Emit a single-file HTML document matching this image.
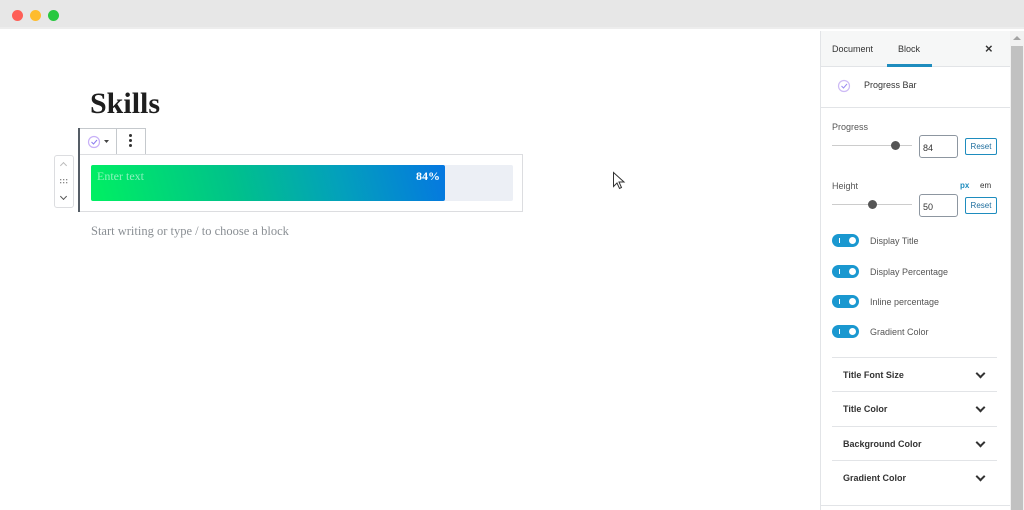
<!DOCTYPE html>
<html><head><meta charset="utf-8"><style>
*{box-sizing:border-box;margin:0;padding:0}
body{width:1024px;height:510px;overflow:hidden;background:#fff;font-family:"Liberation Sans",sans-serif;position:relative}
.abs{position:absolute}
.top{left:0;top:0;width:1024px;height:29px;background:#e7e7e7;border-bottom:2px solid #ededed}
.dot{top:10px;width:11px;height:11px;border-radius:50%}
.serif{font-family:"Liberation Serif","DejaVu Serif",serif}
.side{left:820px;top:31px;width:190px;height:479px;border-left:1px solid #e2e4e7;background:#fff}
.sb{left:1010px;top:31px;width:14px;height:479px;background:#f1f1f1}
.lbl{font-size:9px;color:#555}
.tog{width:27px;height:13px;border-radius:7px;background:#1a98d0;left:832px}
.tog:after{content:"";position:absolute;right:3px;top:3px;width:7px;height:7px;border-radius:50%;background:#fff}
.tog:before{content:"";position:absolute;left:7px;top:4px;width:1px;height:5px;background:#fff}
.inp{width:39px;height:23px;border:1px solid #8d96a0;border-radius:3px;font-size:9px;color:#333;padding:7px 3px}
.rst{width:32px;height:17px;border:1px solid #1e8cbe;border-radius:2px;font-size:8px;color:#1e6e9e;text-align:center;line-height:15px}
.track{left:832px;width:80px;height:1px;background:#ccc}
.knob{width:9px;height:9px;border-radius:50%;background:#555}
.acc{left:832px;width:165px;height:34px;border-top:1px solid #e2e4e7;font-size:9px;font-weight:bold;color:#333;padding:12px 11px}
.acc span{position:absolute;right:13px;top:12px;width:7px;height:7px;border-right:2px solid #333;border-bottom:2px solid #333;transform:rotate(45deg)}
</style></head><body>
<div class="abs top"></div>
<div class="abs dot" style="left:12px;background:#fe5f57"></div>
<div class="abs dot" style="left:30px;background:#febc2e"></div>
<div class="abs dot" style="left:48px;background:#28c840"></div>

<div class="abs serif" style="left:90px;top:87px;font-size:30px;font-weight:bold;color:#1e1e1e">Skills</div>
<div class="abs" style="left:78px;top:128px;width:2px;height:84px;background:#555d66"></div>
<div class="abs" style="left:80px;top:128px;width:66px;height:27px;border:1px solid #c5c9cd;border-left:none"></div>
<div class="abs" style="left:116px;top:128px;width:1px;height:27px;background:#c5c9cd"></div>
<svg class="abs" style="left:87px;top:135px" width="24" height="14"><circle cx="7" cy="7" r="5.5" fill="none" stroke="#c7b0f7" stroke-width="1.2"/><path d="M4.5 7l2 2 3.5-4" fill="none" stroke="#8b7cf0" stroke-width="1"/><path d="M17 5h5l-2.5 3z" fill="#444"/></svg>
<div class="abs" style="left:129px;top:134px;width:3px;height:3px;border-radius:50%;background:#333;box-shadow:0 5px 0 #333,0 10px 0 #333"></div>
<div class="abs" style="left:80px;top:154px;width:443px;height:58px;border:1px solid #dcdde0;border-left:none"></div>
<div class="abs" style="left:54px;top:155px;width:20px;height:53px;border:1px solid #dcdde0;border-radius:3px"></div>
<div class="abs" style="left:61px;top:163px;width:5px;height:5px;border-left:1px solid #bbb;border-top:1px solid #bbb;transform:rotate(45deg)"></div>
<svg class="abs" style="left:59px;top:179px" width="10" height="6"><g fill="#888"><rect x="1" y="0" width="1.3" height="1.3"/><rect x="4" y="0" width="1.3" height="1.3"/><rect x="7" y="0" width="1.3" height="1.3"/><rect x="1" y="3" width="1.3" height="1.3"/><rect x="4" y="3" width="1.3" height="1.3"/><rect x="7" y="3" width="1.3" height="1.3"/></g></svg>
<div class="abs" style="left:61px;top:194px;width:5px;height:5px;border-right:1px solid #555;border-bottom:1px solid #555;transform:rotate(45deg)"></div>
<div class="abs" style="left:91px;top:165px;width:422px;height:36px;background:#eceff5;border-radius:2px"></div>
<div class="abs" style="left:91px;top:165px;width:354px;height:36px;border-radius:2px;background:linear-gradient(75deg,#00f062 0%,#00c28a 40%,#03a0bc 70%,#0577e1 100%)"></div>
<div class="abs serif" style="left:97px;top:169px;font-size:12px;color:rgba(255,255,255,.55)">Enter text</div>
<div class="abs serif" style="left:416px;top:169px;font-size:12px;color:#fff;font-weight:bold">84%</div>
<div class="abs serif" style="left:91px;top:224px;font-size:12.5px;color:#8a8f94">Start writing or type / to choose a block</div>
<svg class="abs" style="left:612px;top:171px" width="14" height="20"><path d="M1.5 1.5v14l3.5-3.5 2.5 5.5 2-1-2.5-5.5h5z" fill="#fff" stroke="#333" stroke-width="1"/></svg>

<div class="abs side"></div>
<div class="abs" style="left:821px;top:31px;width:189px;height:36px;background:#f6f7f7;border-bottom:1px solid #e2e4e7"></div>
<div class="abs" style="left:832px;top:44px;font-size:9px;color:#333">Document</div>
<div class="abs" style="left:898px;top:44px;font-size:9px;color:#333">Block</div>
<div class="abs" style="left:887px;top:64px;width:45px;height:3px;background:#1e8cbe"></div>
<div class="abs" style="left:985px;top:41px;font-size:13px;color:#333;font-weight:bold">×</div>
<svg class="abs" style="left:837px;top:79px" width="14" height="14"><circle cx="7" cy="7" r="5.5" fill="none" stroke="#cdbaf5" stroke-width="1.2"/><path d="M4.5 7l2 2 3.5-4" fill="none" stroke="#9b8cf0" stroke-width="1"/></svg>
<div class="abs" style="left:864px;top:80px;font-size:9px;color:#333">Progress Bar</div>
<div class="abs" style="left:821px;top:107px;width:189px;height:1px;background:#e2e4e7"></div>
<div class="abs lbl" style="left:832px;top:122px">Progress</div>
<div class="abs track" style="top:145px"></div>
<div class="abs knob" style="left:891px;top:141px"></div>
<div class="abs inp" style="left:919px;top:135px">84</div>
<div class="abs rst" style="left:965px;top:138px">Reset</div>
<div class="abs lbl" style="left:832px;top:181px">Height</div>
<div class="abs" style="left:960px;top:181px;font-size:8px;color:#1e8cbe;font-weight:bold">px</div>
<div class="abs" style="left:980px;top:181px;font-size:8px;color:#333">em</div>
<div class="abs track" style="top:204px"></div>
<div class="abs knob" style="left:868px;top:200px"></div>
<div class="abs inp" style="left:919px;top:194px">50</div>
<div class="abs rst" style="left:965px;top:197px">Reset</div>
<div class="abs tog" style="top:234px"></div><div class="abs lbl" style="left:870px;top:236px">Display Title</div>
<div class="abs tog" style="top:265px"></div><div class="abs lbl" style="left:870px;top:267px">Display Percentage</div>
<div class="abs tog" style="top:295px"></div><div class="abs lbl" style="left:870px;top:297px">Inline percentage</div>
<div class="abs tog" style="top:325px"></div><div class="abs lbl" style="left:870px;top:327px">Gradient Color</div>
<div class="abs acc" style="top:357px">Title Font Size<span></span></div>
<div class="abs acc" style="top:391px">Title Color<span></span></div>
<div class="abs acc" style="top:426px">Background Color<span></span></div>
<div class="abs acc" style="top:460px">Gradient Color<span></span></div>
<div class="abs" style="left:821px;top:505px;width:189px;height:1px;background:#e2e4e7"></div>
<div class="abs sb"></div>
<div class="abs" style="left:1011px;top:46px;width:12px;height:464px;background:#c1c1c1"></div>
<div class="abs" style="left:1013px;top:36px;width:0;height:0;border-left:4px solid transparent;border-right:4px solid transparent;border-bottom:4px solid #a3a3a3"></div>
</body></html>
